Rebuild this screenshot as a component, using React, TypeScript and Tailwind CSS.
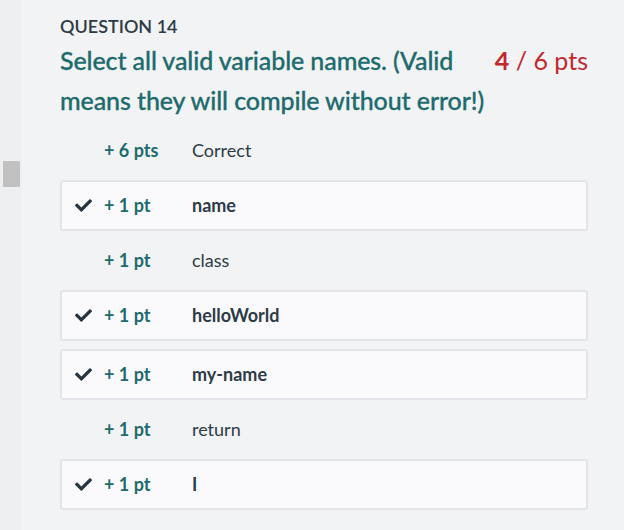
import { FaCheck } from 'react-icons/fa';

type Answer = {
  pts: string;
  text: string;
  picked: boolean;
};

const answers: Answer[] = [
  { pts: '+ 6 pts', text: 'Correct', picked: false },
  { pts: '+ 1 pt', text: 'name', picked: true },
  { pts: '+ 1 pt', text: 'class', picked: false },
  { pts: '+ 1 pt', text: 'helloWorld', picked: true },
  { pts: '+ 1 pt', text: 'my-name', picked: true },
  { pts: '+ 1 pt', text: 'return', picked: false },
  { pts: '+ 1 pt', text: 'I', picked: true },
];

const AnswerRow = ({ a }: { a: Answer }) => (
  <div
    className={
      a.picked
        ? 'flex h-[51px] items-center rounded-[3px] border-2 border-[#e2e4ea] bg-[#fafafc] pl-[13px]'
        : 'flex h-[43px] items-center pl-[15px]'
    }
  >
    <div className="w-[29px]">{a.picked && <FaCheck className="h-[17px] w-[17px] text-[#263540]" />}</div>
    <div className="w-[88px] text-[18px] font-bold text-[#1d6b6d]">{a.pts}</div>
    <div className={a.picked ? 'text-[18px] font-bold text-[#2d3b45]' : 'text-[18px] text-[#2d3b45]'}>
      {a.text}
    </div>
  </div>
);

export default function App() {
  return (
    <div className="flex h-[530px] w-[624px] bg-[#f2f3f5] font-['Lato',sans-serif]">
      <div className="relative w-[22px] shrink-0 bg-[#eeeff1]">
        <div className="absolute left-[3px] top-[161px] h-[26px] w-[17px] bg-[#c1c1c1]" />
      </div>
      <div className="flex-1 pl-[38px] pr-[36px] pt-[14px]">
        <div className="text-[18px] font-semibold leading-[24px] text-[#2d3b45]">QUESTION 14</div>
        <div className="flex items-start">
          <div className="mt-[2px] min-w-0 flex-1 text-[25px] font-medium leading-[40px] tracking-[-0.1px] text-[#1d6b6d] [-webkit-text-stroke:0.3px_#1d6b6d]">
            Select all valid variable names. (Valid means they will compile without error!)
          </div>
          <div className="ml-[4px] mt-[2px] shrink-0 whitespace-nowrap text-[25px] leading-[40px] text-[#c1272d]">
            <span className="font-bold">4</span> / 6 pts
          </div>
        </div>
        <div className="mt-[9px] flex flex-col gap-[8px]">
          {answers.map((a, i) => (
            <AnswerRow key={i} a={a} />
          ))}
        </div>
      </div>
    </div>
  );
}
